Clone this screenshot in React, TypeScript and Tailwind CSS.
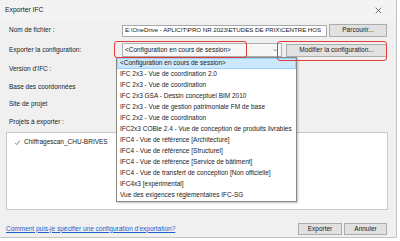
import React from "react";

const items = [
  "<Configuration en cours de session>",
  "IFC 2x3 - Vue de coordination 2.0",
  "IFC 2x3 - Vue de coordination",
  "IFC 2x3 GSA - Dessin conceptuel BIM 2010",
  "IFC 2x3 - Vue de gestion patrimoniale FM de base",
  "IFC 2x2 - Vue de coordination",
  "IFC2x3 COBie 2.4 - Vue de conception de produits livrables",
  "IFC4 - Vue de référence [Architecture]",
  "IFC4 - Vue de référence [Structurel]",
  "IFC4 - Vue de référence [Service de bâtiment]",
  "IFC4 - Vue de transfert de conception [Non officielle]",
  "IFC4x3 [expérimental]",
  "Vue des exigences réglementaires IFC-SG",
];

function Label({ children }: { children: React.ReactNode }) {
  return <div className="w-[116px] pl-[3px] shrink-0 whitespace-nowrap">{children}</div>;
}

export default function App() {
  return (
    <div className="w-[400px] h-[241px] bg-white relative overflow-hidden font-['Liberation_Sans',Arial,sans-serif] text-[6.5px] leading-none text-[#1a1a1a]">
      <div className="w-[397px] h-[238px] flex flex-col bg-[#f0f0f0] border-r border-b border-[#c4c4c4]">
        {/* Title bar */}
        <div className="h-[20px] flex items-center justify-between pl-[5px] pr-[14px] bg-[#f3f3f3]">
          <span className="text-[6.8px]">Exporter IFC</span>
          <svg width="7" height="7" viewBox="0 0 10 10" className="text-[#333]">
            <path d="M1 1 L9 9 M9 1 L1 9" stroke="currentColor" strokeWidth="1" />
          </svg>
        </div>

        {/* Body */}
        <div className="relative flex-1 flex flex-col pl-[6px] pr-[9px]">
          {/* Row 1 */}
          <div className="mt-[4px] h-[13px] flex items-center">
            <Label>Nom de fichier :</Label>
            <div className="w-[205px] h-[12px] bg-white border border-[#a8a8a8] flex items-center pl-[2px] overflow-hidden whitespace-nowrap text-[6.2px] tracking-[-0.05px]">
              E:\OneDrive - APLICIT\PRO NR 2023\ETUDES DE PRIX\CENTRE HOS
            </div>
            <div className="ml-[2px] w-[58px] h-[13px] bg-[#e1e1e1] border border-[#adadad] flex items-center justify-center">
              Parcourir...
            </div>
          </div>

          {/* Row 2 */}
          <div className="mt-[6px] h-[14px] flex items-center">
            <Label>Exporter la configuration:</Label>
            <div className="w-[160px] h-[14px] bg-[#f7f7f7] border border-[#b0b0b0] flex items-center justify-between pl-[2px] pr-[3px] whitespace-nowrap">
              <span>&lt;Configuration en cours de session&gt;</span>
              <svg width="5" height="4" viewBox="0 0 10 6">
                <path d="M1 1 L5 5 L9 1" stroke="#555" strokeWidth="1.2" fill="none" />
              </svg>
            </div>
            <div className="ml-[4px] w-[101px] h-[13px] bg-[#e1e1e1] border border-[#adadad] flex items-center justify-center whitespace-nowrap">
              Modifier la configuration...
            </div>
          </div>

          {/* Rows 3-6 */}
          <div className="mt-[5px] h-[14px] flex items-center">
            <Label>Version d'IFC :</Label>
          </div>
          <div className="mt-[4px] h-[14px] flex items-center">
            <Label>Base des coordonnées</Label>
          </div>
          <div className="mt-[3px] h-[14px] flex items-center">
            <Label>Site de projet</Label>
          </div>
          <div className="mt-[4px] h-[14px] flex items-center">
            <Label>Projets à exporter :</Label>
          </div>

          {/* Projects box */}
          <div className="mt-[3px] w-[382px] h-[78px] bg-white border border-[#c8c8c8] pt-[6px] pl-[7px]">
            <div className="flex items-center gap-[3px]">
              <svg width="7" height="7" viewBox="0 0 10 10">
                <path d="M1.5 5.5 L4 8 L8.5 2" stroke="#7a7a7a" strokeWidth="1.3" fill="none" />
              </svg>
              <span>Chiffragescan_CHU-BRIVES</span>
            </div>
          </div>

          {/* Bottom row */}
          <div className="mt-[13px] h-[12px] flex items-center justify-between">
            <span className="text-[#1a5fcc] underline whitespace-nowrap">
              Comment puis-je spécifier une configuration d'exportation?
            </span>
            <div className="flex gap-[2px]">
              <div className="w-[44px] h-[12px] bg-[#e1e1e1] border border-[#adadad] flex items-center justify-center">
                Exporter
              </div>
              <div className="w-[43px] h-[12px] bg-[#e1e1e1] border border-[#adadad] flex items-center justify-center">
                Annuler
              </div>
            </div>
          </div>

          {/* Dropdown list (overlay) */}
          <div className="absolute left-[116px] top-[37px] w-[181px] h-[145px] bg-white border border-[#8a8a8a] shadow-[1px_1px_2px_rgba(0,0,0,0.25)] flex flex-col">
            {items.map((it, i) => (
              <div
                key={i}
                className={
                  i === 0
                    ? "h-[11px] shrink-0 flex items-center pl-[2px] whitespace-nowrap bg-[#cce8ff] border border-[#99d1ff]"
                    : "h-[11px] shrink-0 flex items-center pl-[3px] whitespace-nowrap"
                }
              >
                {it}
              </div>
            ))}
          </div>

          {/* Red highlights */}
          <div className="absolute left-[114px] top-[21px] w-[133px] h-[17px] border-[1.5px] border-[#e23b3b] rounded-[3px]" />
          <div className="absolute left-[277px] top-[21px] w-[110px] h-[20px] border-[1.5px] border-[#e23b3b] rounded-[3px]" />
        </div>
      </div>
    </div>
  );
}
